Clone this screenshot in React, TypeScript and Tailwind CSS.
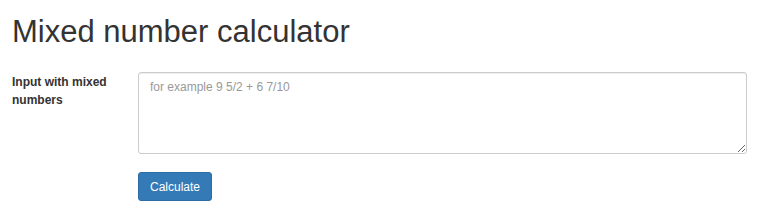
import React from "react";

export default function App() {
  return (
    <div className="min-h-screen bg-white px-3 text-[#333]" style={{ fontFamily: '"Liberation Sans", Arial, sans-serif' }}>
      <h1 className="pt-[14px] text-[31px] leading-[36px] font-normal">Mixed number calculator</h1>

      <div className="mt-[22px] flex">
        <label className="w-[126px] pt-[1px] text-[12px] leading-[18px] font-bold">
          Input with mixed
          <br />
          numbers
        </label>
        <textarea
          placeholder="for example 9 5/2 + 6 7/10"
          className="h-[82px] w-[609px] rounded-[3px] border border-[#ccc] px-[11px] py-[5px] text-[12px] leading-[18px] shadow-[inset_0_1px_1px_rgba(0,0,0,0.075)] outline-none placeholder:text-[#999]"
        />
      </div>

      <div className="mt-[18px] flex">
        <div className="w-[126px]" />
        <button className="h-[29px] rounded-[3px] border border-[#2e6da4] bg-[#337ab7] px-[11px] text-[12px] text-white">
          Calculate
        </button>
      </div>
    </div>
  );
}
